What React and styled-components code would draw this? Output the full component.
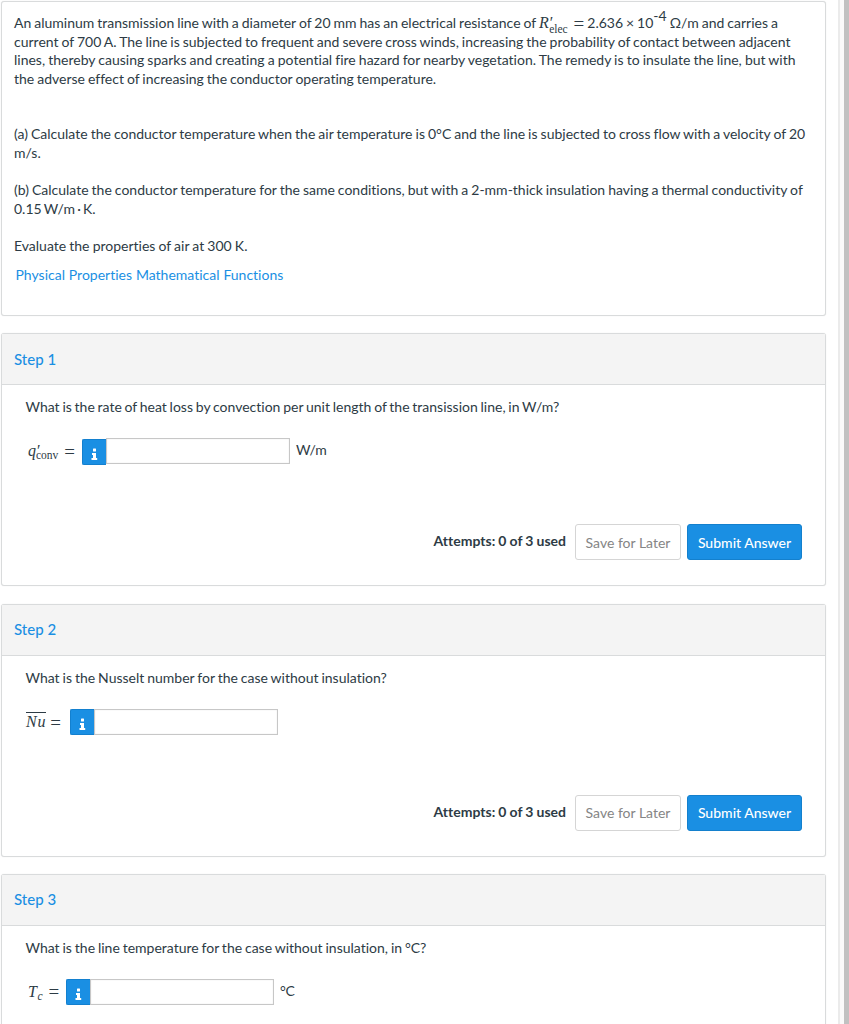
import React from 'react';
import styled, { createGlobalStyle } from 'styled-components';

/**Style */

const GlobalStyle = createGlobalStyle`
* {
    box-sizing: border-box;
}
body {
    margin: 0;
    background: #fff;
    color: #2d3b45;
    font-family: Lato, "Liberation Sans", sans-serif;
    font-size: 14px;
    font-variant-ligatures: no-common-ligatures;
    overflow: hidden;
}
`

const StylePage = styled.div`
display: flex;
justify-content: space-between;
height: 1024px;
overflow: hidden;
`

const StyleContent = styled.main`
display: flex;
flex-direction: column;
gap: 17.3px;
width: 826px;
padding: 1px 0 0 1px;
`

const StyleTrack = styled.div`
width: 11px;
border-left: 2px solid #ebebeb;
border-right: 5px solid #c1c1c1;
background: #fafafa;
`

const StyleCard = styled.section`
flex: none;
height: ${(props) => props.$height}px;
border: 1px solid #d9dbdc;
border-radius: 3px;
box-shadow: 0 0 1px #d9dbdc;
background: #fff;
`

const StyleProblem = styled.div`
padding: 12px 12px 0;
`

const StyleParagraph = styled.div`
margin-bottom: ${(props) => props.$space}px;
`

const StyleLine = styled.div`
height: 18.6px;
line-height: 18.6px;
white-space: pre;
word-spacing: ${(props) => props.$gap || -0.6}px;
`

const StyleLink = styled.a`
display: block;
padding-left: 1.5px;
color: #1a8fe3;
line-height: 19px;
word-spacing: 0.3px;
`

const StyleMath = styled.span`
font-family: "Liberation Serif", serif;
font-size: 16px;
font-style: italic;
line-height: 0;
`

const StyleEquals = styled.span`
font-family: "Liberation Serif", serif;
font-size: 19px;
font-style: normal;
line-height: 0;
vertical-align: -1.5px;
margin-left: ${(props) => props.$shift || 0}px;
`

const StyleSub = styled.sub`
font-size: 11.5px;
font-style: ${(props) => (props.$italic ? 'italic' : 'normal')};
line-height: 0;
vertical-align: ${(props) => props.$drop || -3}px;
margin-left: ${(props) => props.$shift || 0}px;
`

const StyleSup = styled.sup`
font-size: 14px;
line-height: 0;
vertical-align: 7px;
`

const StyleBar = styled.span`
border-top: 1px solid #2d3b45;
line-height: 14px;
letter-spacing: 0.8px;
`

const StyleHeader = styled.header`
display: flex;
align-items: center;
height: 51px;
padding: 0 0 1px 12px;
border-bottom: 1px solid #d9dbdc;
background: #f4f4f4;
color: #1a8fe3;
font-size: 15px;
font-weight: 500;
`

const StyleQuestion = styled.p`
margin: 0;
padding: 13px 24px 0 23.5px;
line-height: 18px;
word-spacing: ${(props) => props.$gap || -0.65}px;
`

const StyleAnswer = styled.div`
display: flex;
align-items: center;
height: 26px;
margin-top: 22px;
padding-left: 24px;
`

const StyleLabel = styled.div`
width: ${(props) => props.$width}px;
padding-left: ${(props) => props.$indent || 0}px;
white-space: nowrap;
line-height: 26px;
`

const StyleInfo = styled.button`
display: flex;
justify-content: center;
width: 23.5px;
height: 26px;
margin-top: 1px;
padding: 8px 0 0;
border: 1px solid #1380cf;
border-right: 0;
border-radius: 2px 0 0 2px;
background: #1a8fe3;
`

const StyleInput = styled.input`
width: 184px;
height: 26px;
border: 1.5px solid #c7c7c7;
box-shadow: inset 0 0 1px #c7c7c7;
background: #fff;
outline: none;
`

const StyleUnit = styled.span`
padding-left: 6.5px;
line-height: 22px;
margin-top: -2px;
letter-spacing: -0.3px;
`

const StyleFooter = styled.footer`
display: flex;
align-items: center;
justify-content: flex-end;
margin-top: 60px;
padding-right: 23px;
`

const StyleAttempts = styled.strong`
margin: -3px 9px 0 0;
font-weight: 700;
word-spacing: -0.3px;
`

const StyleButton = styled.button`
width: ${(props) => props.$width}px;
height: 36px;
padding: 0;
border: 1px solid ${(props) => (props.$primary ? '#1480cd' : '#d5d5d5')};
border-radius: 3px;
background: ${(props) => (props.$primary ? '#1a8fe3' : '#fff')};
color: ${(props) => (props.$primary ? '#fff' : '#858585')};
font: ${(props) => (props.$primary ? 500 : 400)} 14px Lato, sans-serif;
margin-left: ${(props) => (props.$primary ? 6 : 0)}px;
`
/****/

function InfoIcon() {
    return (
        <svg width="7" height="13" viewBox="0 0 7 13" fill="#fff">
            <rect x="2" y="0.5" width="3" height="3" rx="0.5" />
            <path d="M1 5h4v5h1.2v2H.5v-2H2V7H1z" />
        </svg>
    )
}

function Step({ number, question, gap, label, labelWidth, indent, unit }) {
    return (
        <StyleCard $height={253}>
            <StyleHeader>Step {number}</StyleHeader>
            <StyleQuestion $gap={gap}>{question}</StyleQuestion>
            <StyleAnswer>
                <StyleLabel $width={labelWidth} $indent={indent}>{label}</StyleLabel>
                <StyleInfo aria-label="Info"><InfoIcon /></StyleInfo>
                <StyleInput />
                {unit && <StyleUnit>{unit}</StyleUnit>}
            </StyleAnswer>
            <StyleFooter>
                <StyleAttempts>Attempts: 0 of 3 used</StyleAttempts>
                <StyleButton $width={106}>Save for Later</StyleButton>
                <StyleButton $width={115} $primary>Submit Answer</StyleButton>
            </StyleFooter>
        </StyleCard>
    )
}

export default function App() {
    return (
        <>
            <GlobalStyle />
            <StylePage>
                <StyleContent>
                    <StyleCard $height={315}>
                        <StyleProblem>
                            <StyleParagraph $space={37}>
                                <StyleLine $gap={-0.63}>
                                    An aluminum transmission line with a diameter of 20 mm has an electrical resistance of{' '}
                                    <StyleMath>R′<StyleSub $shift={-3} $drop={-5}>elec</StyleSub></StyleMath>
                                    {'  '}<StyleEquals>=</StyleEquals> 2.636 × 10<StyleSup>-4</StyleSup> Ω/m and carries a
                                </StyleLine>
                                <StyleLine>current of 700 A. The line is subjected to frequent and severe cross winds, increasing the probability of contact between adjacent</StyleLine>
                                <StyleLine $gap={-0.47}>lines, thereby causing sparks and creating a potential fire hazard for nearby vegetation. The remedy is to insulate the line, but with</StyleLine>
                                <StyleLine>the adverse effect of increasing the conductor operating temperature.</StyleLine>
                            </StyleParagraph>
                            <StyleParagraph $space={18.6}>
                                <StyleLine $gap={-0.55}>(a) Calculate the conductor temperature when the air temperature is 0°C and the line is subjected to cross flow with a velocity of 20</StyleLine>
                                <StyleLine>m/s.</StyleLine>
                            </StyleParagraph>
                            <StyleParagraph $space={18.6}>
                                <StyleLine $gap={-0.57}>(b) Calculate the conductor temperature for the same conditions, but with a 2-mm-thick insulation having a thermal conductivity of</StyleLine>
                                <StyleLine $gap={-1.4}>0.15 W/m · K.</StyleLine>
                            </StyleParagraph>
                            <StyleParagraph $space={9}>
                                <StyleLine $gap={-0.45}>Evaluate the properties of air at 300 K.</StyleLine>
                            </StyleParagraph>
                            <StyleLink>Physical Properties Mathematical Functions</StyleLink>
                        </StyleProblem>
                    </StyleCard>
                    <Step
                        number={1}
                        gap={-0.82}
                        question="What is the rate of heat loss by convection per unit length of the transission line, in W/m?"
                        label={<StyleMath>q′<StyleSub $shift={-3.5}>conv</StyleSub> <StyleEquals $shift={2}>=</StyleEquals></StyleMath>}
                        labelWidth={56}
                        indent={2}
                        unit="W/m"
                    />
                    <Step
                        number={2}
                        question="What is the Nusselt number for the case without insulation?"
                        label={<StyleMath><StyleBar>Nu</StyleBar> <StyleEquals>=</StyleEquals></StyleMath>}
                        labelWidth={44}
                    />
                    <Step
                        number={3}
                        gap={-0.7}
                        question="What is the line temperature for the case without insulation, in °C?"
                        label={<StyleMath>T<StyleSub $italic $shift={0.5}>c</StyleSub> <StyleEquals $shift={2}>=</StyleEquals></StyleMath>}
                        labelWidth={40}
                        indent={2}
                        unit="°C"
                    />
                </StyleContent>
                <StyleTrack />
            </StylePage>
        </>
    );
}
